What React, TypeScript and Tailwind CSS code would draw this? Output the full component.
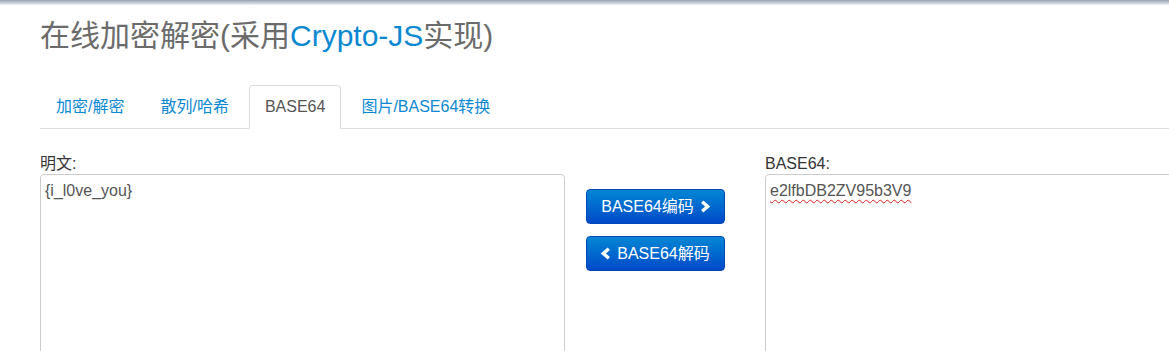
import React from "react";

function ChevronRight() {
  return (
    <svg width="10" height="13" viewBox="0 0 10 13" className="shrink-0">
      <polyline points="2.2,1.8 7.6,6.5 2.2,11.2" fill="none" stroke="white" strokeWidth="3.4" strokeLinecap="butt" strokeLinejoin="miter" />
    </svg>
  );
}

function ChevronLeft() {
  return (
    <svg width="10" height="13" viewBox="0 0 10 13" className="shrink-0">
      <polyline points="7.8,1.8 2.4,6.5 7.8,11.2" fill="none" stroke="white" strokeWidth="3.4" strokeLinecap="butt" strokeLinejoin="miter" />
    </svg>
  );
}

export default function App() {
  const font = { fontFamily: '"Liberation Sans", "Noto Sans CJK SC", Arial, sans-serif' };
  return (
    <div className="w-[1169px] h-[351px] overflow-hidden bg-white" style={font}>
      <div className="h-[5px] bg-gradient-to-b from-[#97a3ad] to-[#eaf2f7]" />
      <h1 className="ml-[40px] mt-[13px] text-[30px] leading-[36px] font-normal text-[#6b6b6b] whitespace-nowrap">
        在线加密解密(采用<span className="text-[#0b88d2]">Crypto-JS</span>实现)
      </h1>
      <div className="ml-[40px] mt-[31px] flex gap-[4px] border-b border-[#dddddd] text-[16px] leading-[22px]">
        <div className="-mb-px px-[15px] py-[10px] border border-transparent text-[#0b88d2] whitespace-nowrap">加密/解密</div>
        <div className="-mb-px px-[15px] py-[10px] border border-transparent text-[#0b88d2] whitespace-nowrap">散列/哈希</div>
        <div className="-mb-px px-[15px] py-[10px] border border-[#dddddd] border-b-white bg-white rounded-t-[4px] text-[#555555] whitespace-nowrap">BASE64</div>
        <div className="-mb-px px-[15px] py-[10px] border border-transparent text-[#0b88d2] whitespace-nowrap">图片/BASE64转换</div>
      </div>
      <div className="ml-[40px] mt-[25px] flex items-start">
        <div className="w-[525px] shrink-0">
          <div className="text-[16px] leading-[20px] text-[#333333]">明文:</div>
          <div className="h-[240px] border border-[#cccccc] rounded-[4px] px-[4px] pt-[6px] text-[16px] leading-[20px] text-[#555555]">
            {"{i_l0ve_you}"}
          </div>
        </div>
        <div className="w-[200px] shrink-0 pt-[35px] pl-[21px] flex flex-col gap-[12px]">
          <button className="w-[139px] h-[35px] rounded-[4px] border border-[#0048b8] bg-gradient-to-b from-[#0a86d4] to-[#0048c8] text-white text-[16px] leading-[20px] flex items-center justify-center gap-[6px]">
            <span>BASE64编码</span>
            <ChevronRight />
          </button>
          <button className="w-[139px] h-[35px] rounded-[4px] border border-[#0048b8] bg-gradient-to-b from-[#0a86d4] to-[#0048c8] text-white text-[16px] leading-[20px] flex items-center justify-center gap-[6px]">
            <ChevronLeft />
            <span>BASE64解码</span>
          </button>
        </div>
        <div className="w-[525px] shrink-0">
          <div className="text-[16px] leading-[20px] text-[#333333]">BASE64:</div>
          <div className="h-[240px] border border-[#cccccc] rounded-[4px] px-[4px] pt-[6px] text-[16px] leading-[20px] text-[#555555]">
            <span className="underline decoration-wavy decoration-[#e02020] decoration-1 underline-offset-[3px]">e2lfbDB2ZV95b3V9</span>
          </div>
        </div>
      </div>
    </div>
  );
}
